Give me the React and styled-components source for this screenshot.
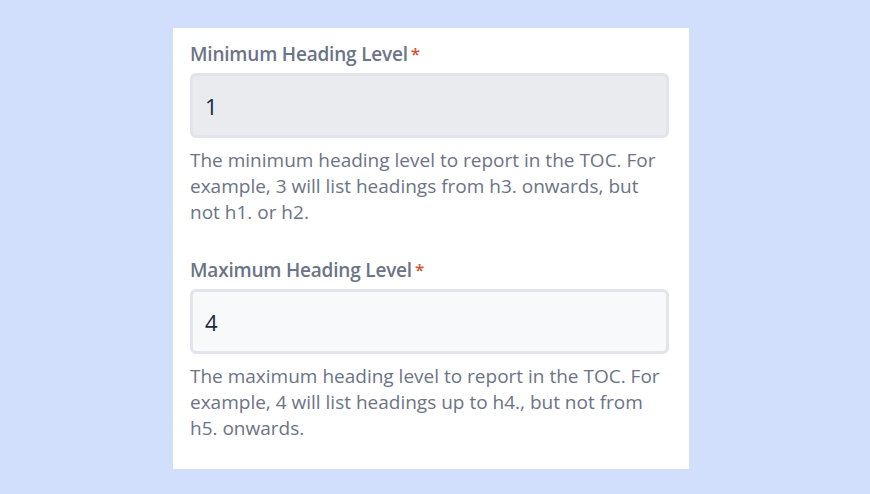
import React from "react";
import styled, { createGlobalStyle } from "styled-components";

const Global = createGlobalStyle`
  html, body { margin: 0; padding: 0; }
  body {
    background: #d1dffc;
    font-family: "Open Sans", "Noto Sans", sans-serif;
  }
`;

const Page = styled.div`
  width: 870px;
  height: 494px;
  display: flex;
  justify-content: center;
  padding: 28px 8px 0 0;
  box-sizing: border-box;
`;

const Card = styled.div`
  width: 516px;
  height: 441px;
  box-sizing: border-box;
  background: #ffffff;
  padding: 13px 20px 26px 17px;
  display: flex;
  flex-direction: column;
  gap: 32px;
`;

const Field = styled.div`
  display: flex;
  flex-direction: column;
`;

const Label = styled.label`
  font-size: 19px;
  line-height: 26px;
  font-weight: 600;
  color: #6b7386;
  margin-bottom: 6px;
  letter-spacing: -0.2px;
`;

const Req = styled.span`
  color: #d4532c;
  margin-left: 3px;
  font-size: 17px;
  vertical-align: 1px;
`;

const Input = styled.div`
  height: 65px;
  box-sizing: border-box;
  border: 3px solid #e1e4ea;
  border-radius: 6px;
  background: ${(p) => (p.$disabled ? "#e9ebef" : "#f8f9fb")};
  display: flex;
  align-items: center;
  padding-left: 12px;
  font-size: 22px;
  color: #1b2940;
`;

const Help = styled.p`
  margin: 9px 0 0;
  max-width: 470px;
  font-size: 19px;
  line-height: 26px;
  color: #6b7386;
`;

export default function App() {
  return (
    <>
      <Global />
      <Page>
        <Card>
          <Field>
            <Label>
              Minimum Heading Level<Req>*</Req>
            </Label>
            <Input $disabled>1</Input>
            <Help>
              The minimum heading level to report in the TOC. For example, 3 will list
              headings from h3. onwards, but not h1. or h2.
            </Help>
          </Field>
          <Field>
            <Label>
              Maximum Heading Level<Req>*</Req>
            </Label>
            <Input>4</Input>
            <Help>
              The maximum heading level to report in the TOC. For example, 4 will list
              headings up to h4., but not from h5. onwards.
            </Help>
          </Field>
        </Card>
      </Page>
    </>
  );
}
